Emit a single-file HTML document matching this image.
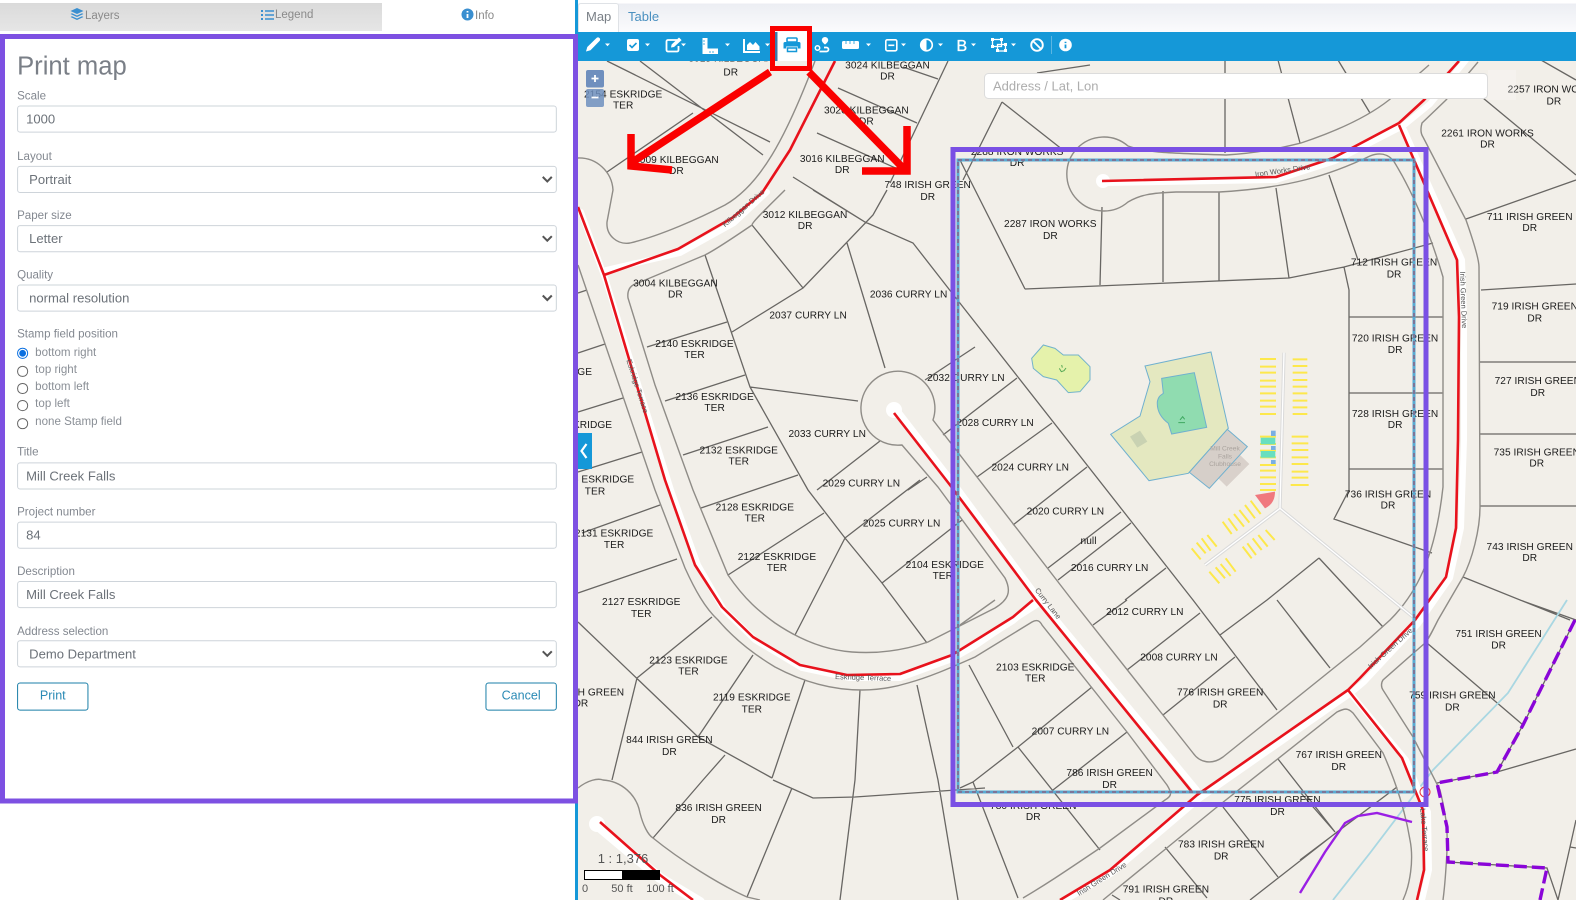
<!DOCTYPE html>
<html lang="en"><head><meta charset="utf-8"><title>Print map</title>
<style>
*{box-sizing:border-box}
html,body{margin:0;padding:0;width:1576px;height:900px;overflow:hidden;background:#fff;font-family:"Liberation Sans",sans-serif}
.abs{position:absolute}
#left{position:absolute;left:0;top:0;width:575px;height:900px;background:#fff;overflow:hidden}
.tabbg{position:absolute;left:0;top:3px;width:382px;height:28px;background:linear-gradient(#dadada,#e6e6e6)}
.tab{position:absolute;top:8px;font-size:11.5px;line-height:14px;color:#8a8a8a;white-space:nowrap}
.tab svg{vertical-align:-2px;margin-right:1px}
#form{position:absolute;left:0;top:0;width:575px;height:900px;transform:scale(1.0051);transform-origin:0 0;color:#7b8088}
#form h1{position:absolute;left:17px;top:51px;margin:0;font-weight:400;font-size:25.5px;line-height:30px;color:#7a7f87}
.lb{position:absolute;left:17px;font-size:11.5px;line-height:14px;color:#838890;white-space:nowrap}
.in{position:absolute;left:17px;width:537px;height:27px;border:1px solid #ced4da;border-radius:3px;background:#fff;font-size:13px;line-height:25px;color:#6c7279;padding-left:8px;white-space:nowrap}
.in.sel{padding-left:11px}
.in.sel svg{position:absolute;right:3px;top:8px}
.rd{position:absolute;left:35px;font-size:11.5px;line-height:14px;color:#8a8f96;white-space:nowrap}
.ci{position:absolute;left:17px;width:10.5px;height:10.5px;border:1px solid #666;border-radius:50%;background:#fff}
.ci.on{border:1.5px solid #0a6fe0;background:radial-gradient(circle,#0a6fe0 0,#0a6fe0 3.1px,#fff 3.6px)}
.btn{position:absolute;top:679px;width:71px;height:28px;border:1px solid #1b7fa8;border-radius:3px;background:#fff;color:#2a8ab5;font-size:12.5px;line-height:25px;text-align:center}
#tabs{position:absolute;left:578px;top:0;width:998px;height:32px;background:linear-gradient(#fff 0,#fff 3px,#eceef3 4px,#fbfbfd 32px)}
#tbar{position:absolute;left:575px;top:32px;width:1001px;height:29px;background:#1598d8}
svg{display:block}
text{font-family:"Liberation Sans",sans-serif}
</style></head><body>

<div id="tabs"></div>
<div class="abs" style="left:578px;top:3px;width:41px;height:30px;background:#fff;border:1px solid #dfe2e6;border-bottom:0;border-radius:3px 3px 0 0"></div>
<div class="abs" style="left:586px;top:9px;font-size:13px;line-height:15px;color:#7a8087">Map</div>
<div class="abs" style="left:628px;top:9px;font-size:13px;line-height:15px;color:#4a90c0">Table</div>

<div id="tbar"></div>
<svg class="abs" style="left:0;top:0" width="1576" height="900" viewBox="0 0 1576 900">
<defs><clipPath id="mc"><rect x="578" y="61" width="998" height="839"/></clipPath></defs>
<g clip-path="url(#mc)"><g style="filter:blur(.35px)">
<rect x="570" y="55" width="1010" height="850" fill="#f2efe9"/>

<!-- lot lines -->
<path fill="none" stroke="#686663" stroke-width="1.3" d="
M607 61L770 142M640 61L763 155M693 113L607 172M948 61L890 183M938 79L903 67M838 88L917 123M817 133L900 170M793 177L865 222
M887 190L873 215L803 288L732 332M847 243L885 368M813 190L865 222L913 243L952 293L1193 600L1277 710
M752 225L803 288M705 255L750 387L808 490L845 538L882 583L927 643M727 322L647 347M745 375L665 401M750 387L858 401M768 427L683 455M798 475L701 508
M880 441L817 490M925 380L975 347M927 477L908 490M943 435L1017 378M578 293L587 290M578 353L605 344M578 412L623 398M578 472L642 452
M660 505L582 533M677 559L578 593M824 513L728 575M845 538L795 635M845 538L920 480M882 583L962 520M712 617L637 678L612 780M578 622L698 737L772 778
M753 655L698 737M805 680L772 778M860 690L855 780L840 900M917 685L938 780L958 900M725 755L703 780L653 838M792 788L747 897M773 780L813 798L855 797L985 788
M969 665L1013 747M960 788L973 782L1018 747L1092 687M1018 747L1100 850M1053 790L1127 732M973 782L1018 898M1093 625L1127 600M1127 670L1200 613M1163 715L1235 657M1220 635L1267 600M1277 600L1330 668
M1278 759L1335 832M1165 847L1207 898M1223 807L1278 877M1250 900L1337 832L1397 787M1112 895L1120 900
M1052 423L977 477M1087 467L1013 525M1121 512L1048 568M1131 523L1058 580M1166 568L1125 600
M1219 192L1219 282M1276 188L1289 278M1329 175L1358 260M1025 289L1289 278L1344 267L1433 243M1344 267L1349 290L1349 490L1334 519L1432 553M1349 317L1443 317M1349 393L1443 393M1349 469L1443 469
M1025 289L960 160M1102 207L1100 285M1163 191L1163 282M1002 102L963 180M1002 102L1063 150M1037 73L1090 65M1225 60L1225 153M1278 60L1300 143M1338 60L1370 113
M1483 98L1576 175M1466 219L1576 180M1481 290L1576 284M1541 60L1576 80M1480 362L1576 362M1480 434L1576 434M1480 506L1576 506M1463 577L1570 620
M1319 558L1267 600M1319 558L1383 627M1427 643L1523 725M1497 772L1576 749M1437 783L1497 772L1523 725L1575 620M1520 600L1576 620M1300 630L1330 668M1397 787L1300 860M1300 792L1335 832
M1448 862L1547 868L1558 900M1576 820L1570 847L1558 900M1570 847L1576 848"/>

<!-- water -->
<path fill="none" stroke="#a9d7e2" stroke-width="1.8" d="M1567 600L1508 693L1433 770L1370 853L1333 900"/>

<!-- road edges -->
<path fill="none" stroke="#8f8c87" stroke-width="1.4" d="
M578 158A34 34 0 0 1 613 190L607 222C606 236 618 245 630 243C660 236 700 218 725 205C760 185 785 140 815 61
M785 190C770 205 752 222 752 225C730 240 715 250 705 255L638 283C630 285 627 290 628 298L655 385L693 490L728 575C745 600 760 612 775 623C800 640 825 650 852 652C880 654 905 650 928 642L995 608C1008 600 1012 592 1005 578L938 487L902 445A37 37 0 1 1 933 420L1072 600L1193 753C1200 763 1212 765 1223 757L1360 647L1390 620C1415 595 1435 560 1443 487L1443 277C1432 240 1415 195 1393 160C1387 154 1380 152 1370 156C1330 175 1290 188 1219 192L1176 192C1150 193 1140 195 1128 202A37 37 0 1 1 1128 146C1145 152 1160 153 1226 155C1260 153 1280 148 1301 143C1340 130 1370 115 1389 100L1429 65
M578 265L655 490L685 568C695 590 705 608 718 620C735 640 755 655 775 667C805 683 835 690 862 690C880 690 895 687 908 683C930 677 950 668 975 657L1032 622C1037 619 1040 621 1042 625L1127 732L1167 785C1172 793 1172 796 1165 800L1100 848C1060 875 1045 885 1023 898
M960 625L995 600M1217 807L1337 712C1345 708 1348 708 1353 713L1383 753C1395 780 1405 810 1410 840C1414 860 1410 885 1403 900M1217 807L1103 900
M1478 62L1446 100L1422 123C1420 130 1421 134 1423 137L1466 220C1473 240 1479 260 1479 267L1480 507C1480 530 1472 560 1463 577L1438 620C1432 632 1428 640 1425 643L1383 680C1381 683 1381 687 1383 690L1413 737L1440 790C1446 815 1448 830 1447 850C1446 870 1445 885 1443 900
M578 788C588 780 598 778 603 780A40 40 0 0 1 640 813C643 825 648 835 653 838C680 860 720 885 747 897L760 900"/>

<!-- sidewalk white strips -->
<g fill="none" stroke="#fff" stroke-linecap="round" stroke-linejoin="round" stroke-width="6">
<path d="M581 212L606 281L671 490L698 565L724 610L755 640L802 668L849 678L900 678L952 659L975 646L1013 620L1038 604"/>
<path d="M606 270L680 253L734 223L767 192"/>
<path d="M960 654L1013 621L1038 600"/>
<path d="M897 410L955 485L1040 600L1197 790"/>
<path d="M1062 902L1112 873L1199 799L1351 693L1364 682L1418 624L1450 578L1461 528L1464 440L1464 317L1462 260L1404 130"/>
<path d="M1104 183L1276 180L1335 161L1403 126L1430 104L1466 60"/>
<path d="M1351 694L1406 760L1428 812L1429 870L1422 900"/>
<path d="M597 825L660 878L700 902" stroke-width="10"/>
</g>
<circle cx="894" cy="410" r="8" fill="#fff"/><circle cx="597" cy="824" r="8" fill="#fff"/><circle cx="1103" cy="181" r="7" fill="#fff"/>

<!-- red center lines -->
<g fill="none" stroke="#e8121c" stroke-linejoin="round" stroke-width="2.6">
<path d="M578 207L604 275L665 480L695 565L722 607L753 637L800 665L847 675L900 674L952 655L1013 617L1033 600"/>
<path d="M604 275L678 249L732 218L762 193L790 150L835 61"/>
<path d="M894 413L950 485L1036 600L1192 792"/>
<path d="M1060 900L1110 870L1197 795L1348 690L1360 678L1415 620L1446 577L1456 528L1458 440L1459 317L1457 260L1399 125"/>
<path d="M1102 181L1276 177L1333 158L1399 123L1424 100L1459 61"/>
<path d="M1348 690L1402 758L1423 810L1424 870L1417 900"/>
<path d="M600 822L660 875L693 900"/>
</g>

<!-- Park (zoom coordinates) -->
<g transform="translate(1000 340) scale(.33333)">
<path d="M852 38L840 505L1239 831M840 505L615 675" fill="none" stroke="#dadada" stroke-width="10"/>
<path d="M852 38L840 505L1239 831M840 505L615 675" fill="none" stroke="#fff" stroke-width="4"/>
<path d="M95 55L130 15L165 25L190 45L235 45L270 80L270 120L240 155L205 158L170 120L130 110L100 85Z" fill="#e5f2ab" stroke="#72b3cb" stroke-width="3"/>
<path d="M178 85l6 10l8-3l6-8M185 75l2 8" fill="none" stroke="#55a855" stroke-width="3"/>
<path d="M435 78L633 36L685 265L565 400L447 422L332 283L420 228L450 125Z" fill="#e4e8c0" stroke="#6fb0cf" stroke-width="3"/>
<path d="M485 115L583 98L620 262L515 282L505 250C485 235 470 215 472 185C476 165 485 165 490 160Z" fill="#90dcb0" stroke="#6fb0cf" stroke-width="3"/>
<path d="M535 248h20M540 240l8-10l6 8" fill="none" stroke="#3ea860" stroke-width="3"/>
<path d="M390 290L420 272L442 305L412 323Z" fill="#c9d2b2"/>
<path d="M720 345L748 372L680 440L655 415Z" fill="#d9d1cb"/>
<path d="M682 268L742 320L628 445L568 397Z" fill="#d6cfc9" stroke="#6fb0cf" stroke-width="3"/>
<text x="675" y="332" text-anchor="middle" font-size="20" fill="#aaa39e">Mill Creek</text>
<text x="675" y="355" text-anchor="middle" font-size="20" fill="#aaa39e">Falls</text>
<text x="675" y="378" text-anchor="middle" font-size="20" fill="#aaa39e">Clubhouse</text>
<path fill="none" stroke="#fde84b" stroke-width="6" d="
M780 57h48M780 80h48M780 98h48M780 122h48M780 140h48M780 160h48M780 182h48M780 200h48M780 222h48
M780 290h48M780 312h48M780 332h48M780 352h48M780 375h48M780 392h48M780 412h48M780 432h48M780 450h48
M878 58h44M878 78h44M878 98h44M878 120h44M878 140h44M878 160h44M878 182h44M878 202h44M878 222h44
M875 290h50M875 310h50M875 330h50M875 352h50M875 372h50M875 395h50M875 413h50M872 435h54
M668 545L695 582M685 535L712 572M702 522L732 560M718 510L748 548M735 495L765 535M752 482L782 522
M575 625L602 658M590 608L617 640M605 595L632 632M622 585L650 620
M728 620L755 655M742 610L768 645M758 595L785 630M775 585L803 620M797 570L824 600
M628 695L658 730M647 682L675 715M662 672L692 708M677 655L707 695"/>
<rect x="782" y="293" width="44" height="20" fill="#68dfbf"/><rect x="782" y="333" width="44" height="20" fill="#68dfbf"/>
<rect x="813" y="272" width="14" height="16" fill="#79afe2"/><rect x="813" y="318" width="14" height="12" fill="#79afe2"/><rect x="813" y="360" width="14" height="12" fill="#79afe2"/>
<path d="M765 465L825 455C825 480 815 495 795 505Z" fill="#f0787e"/>
</g>

<!-- purple routes -->
<path fill="none" stroke="#8a05d8" stroke-width="3.4" stroke-dasharray="13 5" d="M1575 620L1523 725L1497 772L1437 783L1447 827L1448 862L1547 868L1540 900"/>
<path fill="none" stroke="#9a1fe4" stroke-width="2.4" d="M1300 893L1325 852L1345 823L1358 816L1377 813L1412 822"/>
<circle cx="1425" cy="792" r="5" fill="none" stroke="#e8303a"/>

<!-- road names -->
<g font-size="7.5" fill="#555" text-anchor="middle">
<text transform="translate(745 210) rotate(-41)">Kilbeggan Drive</text>
<text transform="translate(1283 173) rotate(-8)">Iron Works Drive</text>
<text transform="translate(1461 300) rotate(88)">Irish Green Drive</text>
<text transform="translate(635 387) rotate(72)">Eskridge Terrace</text>
<text transform="translate(863 680) rotate(2)">Eskridge Terrace</text>
<text transform="translate(1046 605) rotate(52)">Curry Lane</text>
<text transform="translate(1392 650) rotate(-42)">Irish Green Drive</text>
<text transform="translate(1103 881) rotate(-32)">Irish Green Drive</text>
<text transform="translate(1422 830) rotate(85)">Lake Terrace</text>
</g>

<!-- parcel labels -->
<g transform="scale(1.0051)" font-size="10.1" fill="#1a1a1a" text-anchor="middle" style="letter-spacing:.05px">
<text x="727" y="61">3015 KILBEGGAN</text><text x="727" y="75">DR</text>
<text x="883" y="68">3024 KILBEGGAN</text><text x="883" y="79">DR</text>
<text x="620" y="97">2154 ESKRIDGE</text><text x="620" y="108">TER</text>
<text x="862" y="113">3020 KILBEGGAN</text><text x="862" y="124">DR</text>
<text x="673" y="162">3009 KILBEGGAN</text><text x="673" y="173">DR</text>
<text x="838" y="161">3016 KILBEGGAN</text><text x="838" y="172">DR</text>
<text x="923" y="187">748 IRISH GREEN</text><text x="923" y="199">DR</text>
<text x="1012" y="154">2288 IRON WORKS</text><text x="1012" y="165">DR</text>
<text x="1045" y="226">2287 IRON WORKS</text><text x="1045" y="238">DR</text>
<text x="801" y="217">3012 KILBEGGAN</text><text x="801" y="228">DR</text>
<text x="672" y="285">3004 KILBEGGAN</text><text x="672" y="296">DR</text>
<text x="904" y="296">2036 CURRY LN</text><text x="804" y="317">2037 CURRY LN</text>
<text x="691" y="345">2140 ESKRIDGE</text><text x="691" y="356">TER</text>
<text x="711" y="398">2136 ESKRIDGE</text><text x="711" y="409">TER</text>
<text x="823" y="435">2033 CURRY LN</text><text x="961" y="379">2032 CURRY LN</text>
<text x="990" y="424">2028 CURRY LN</text><text x="1025" y="468">2024 CURRY LN</text>
<text x="1060" y="512">2020 CURRY LN</text><text x="1083" y="541">null</text>
<text x="1104" y="568">2016 CURRY LN</text><text x="1139" y="612">2012 CURRY LN</text>
<text x="1173" y="657">2008 CURRY LN</text><text x="857" y="484">2029 CURRY LN</text>
<text x="897" y="524">2025 CURRY LN</text>
<text x="735" y="451">2132 ESKRIDGE</text><text x="735" y="462">TER</text>
<text x="751" y="508">2128 ESKRIDGE</text><text x="751" y="519">TER</text>
<text x="773" y="557">2122 ESKRIDGE</text><text x="773" y="568">TER</text>
<text x="940" y="565">2104 ESKRIDGE</text><text x="938" y="576">TER</text>
<text x="592" y="480">2135 ESKRIDGE</text><text x="592" y="492">TER</text>
<text x="611" y="534">2131 ESKRIDGE</text><text x="611" y="545">TER</text>
<text x="638" y="602">2127 ESKRIDGE</text><text x="638" y="614">TER</text>
<text x="685" y="660">2123 ESKRIDGE</text><text x="685" y="671">TER</text>
<text x="748" y="697">2119 ESKRIDGE</text><text x="748" y="709">TER</text>
<text x="1030" y="667">2103 ESKRIDGE</text><text x="1030" y="678">TER</text>
<text x="1065" y="731">2007 CURRY LN</text>
<text x="1104" y="772">786 IRISH GREEN</text><text x="1104" y="784">DR</text>
<text x="1214" y="692">776 IRISH GREEN</text><text x="1214" y="704">DR</text>
<text x="1332" y="754">767 IRISH GREEN</text><text x="1332" y="766">DR</text>
<text x="1271" y="799">775 IRISH GREEN</text><text x="1271" y="811">DR</text>
<text x="1215" y="843">783 IRISH GREEN</text><text x="1215" y="855">DR</text>
<text x="1160" y="888">791 IRISH GREEN</text><text x="1160" y="900">DR</text>
<text x="1028" y="805">780 IRISH GREEN</text><text x="1028" y="816">DR</text>
<text x="666" y="739">844 IRISH GREEN</text><text x="666" y="751">DR</text>
<text x="715" y="807">836 IRISH GREEN</text><text x="715" y="819">DR</text>
<text x="578" y="692">848 IRISH GREEN</text><text x="578" y="703">DR</text>
<text x="570" y="426">2139 ESKRIDGE</text><text x="550" y="373">2143 ESKRIDGE</text><text x="532" y="320">2147 ESKRIDGE</text>
<text x="1387" y="264">712 IRISH GREEN</text><text x="1387" y="276">DR</text>
<text x="1388" y="340">720 IRISH GREEN</text><text x="1388" y="351">DR</text>
<text x="1388" y="415">728 IRISH GREEN</text><text x="1388" y="426">DR</text>
<text x="1381" y="495">736 IRISH GREEN</text><text x="1381" y="506">DR</text>
<text x="1522" y="547">743 IRISH GREEN</text><text x="1522" y="558">DR</text>
<text x="1529" y="453">735 IRISH GREEN</text><text x="1529" y="464">DR</text>
<text x="1530" y="382">727 IRISH GREEN</text><text x="1530" y="394">DR</text>
<text x="1527" y="308">719 IRISH GREEN</text><text x="1527" y="320">DR</text>
<text x="1522" y="219">711 IRISH GREEN</text><text x="1522" y="230">DR</text>
<text x="1480" y="136">2261 IRON WORKS</text><text x="1480" y="147">DR</text>
<text x="1546" y="92">2257 IRON WORKS</text><text x="1546" y="104">DR</text>
<text x="1491" y="634">751 IRISH GREEN</text><text x="1491" y="645">DR</text>
<text x="1445" y="695">759 IRISH GREEN</text><text x="1445" y="707">DR</text>
</g>

<!-- scale -->
<text x="623" y="863" text-anchor="middle" font-size="13" fill="#555">1 : 1,376</text>
<rect x="584.5" y="870.5" width="38" height="9" fill="#fff" stroke="#000"/><rect x="622" y="870" width="38" height="10" fill="#000"/>
<g font-size="11" fill="#555" text-anchor="middle"><text x="585" y="892">0</text><text x="622" y="892">50 ft</text><text x="660" y="892">100 ft</text></g>

<!-- zoom controls + search -->
<rect x="586" y="70" width="18" height="17.5" rx="2" fill="#6f8fbe"/><rect x="586" y="89" width="18" height="18" rx="2" fill="#6f8fbe" opacity=".85"/>
<path d="M591.500 78.500h7M595 75v7M591.500 97.500h7" stroke="#fff" stroke-width="1.800"/>
<rect x="1488" y="70" width="28" height="30" fill="#fff" opacity=".22"/>
<rect x="984.5" y="73.5" width="503" height="25" rx="4" fill="#fff" stroke="#dcdcdc"/>
<text x="993" y="90.5" font-size="13" fill="#adadad">Address / Lat, Lon</text>

<!-- collapse -->
<rect x="578" y="433" width="14" height="36" fill="#1598d8"/>
<path d="M586.5 444L581.5 451L586.5 458" fill="none" stroke="#fff" stroke-width="2.2"/>
</g></g>

<!-- toolbar icons -->
<g fill="#fff" stroke="none">
<path d="M586 51.500l1.300-4.500L596.500 38a2 2 0 0 1 3 3L590.500 50.200Z"/>
<rect x="627" y="39" width="12" height="12" rx="2"/><path d="M629.500 45l2.500 2.500l4.500-4.500" fill="none" stroke="#1598d8" stroke-width="1.600"/>
<path d="M677 40h-9a1.500 1.500 0 0 0-1.500 1.500V50a1.500 1.500 0 0 0 1.500 1.500h9a1.500 1.500 0 0 0 1.500-1.500V46" fill="none" stroke="#fff" stroke-width="1.800"/><path d="M671 47.500l.6-3L679 37.500l2.600 2.600L674 47Z"/>
<path d="M702.500 38h5v10.500h10.500v5.500h-15.500Z"/><path d="M703 41h2M703 44h2M710 53v-2M713 53v-2" stroke="#1598d8" stroke-width=".8"/>
<path d="M745 39v12h15v2h-17V39Z"/><path d="M747 50v-5l3-3l3 3l2.500-3l4 4.500v3.500Z"/>
<!-- route -->
<circle cx="817.500" cy="48" r="2.200" fill="none" stroke="#fff" stroke-width="1.500"/>
<path d="M825 37a3.200 3.200 0 0 1 3.200 3.200c0 1.900-3.200 4.300-3.200 4.300s-3.200-2.400-3.200-4.300A3.200 3.200 0 0 1 825 37Z"/>
<path d="M819.500 51.500h7a2 2 0 0 0 0-4h-2.500" fill="none" stroke="#fff" stroke-width="1.700"/>
<!-- ruler -->
<rect x="842" y="41" width="17" height="8" rx="1.500"/><path d="M846 41v3M850 41v3M854 41v3" stroke="#1598d8" stroke-width=".8"/>
<!-- minus square -->
<rect x="885.800" y="39.800" width="11" height="11" rx="1.500" fill="none" stroke="#fff" stroke-width="1.600"/><rect x="888.300" y="44.500" width="6" height="1.600"/>
<!-- adjust -->
<circle cx="926.500" cy="45" r="5.800" fill="none" stroke="#fff" stroke-width="1.600"/><path d="M926.500 39.200a5.800 5.800 0 0 1 0 11.600Z" transform="rotate(180 926.500 45)"/>
<text x="956.500" y="51" font-size="16" fill="#fff" stroke="#fff" stroke-width=".35">B</text>
<!-- vector -->
<g fill="none" stroke="#fff" stroke-width="1.300"><rect x="992.500" y="39.500" width="9" height="7"/><rect x="997.500" y="44.500" width="8" height="6.500"/></g>
<path d="M991 38h3v3h-3ZM1000 38h3v3h-3ZM991 45h3v3h-3ZM996 49h3v3h-3ZM1004 43h3v3h-3ZM1004 49h3v3h-3Z"/>
<!-- ban -->
<circle cx="1037" cy="45" r="5.800" fill="none" stroke="#fff" stroke-width="1.900"/><path d="M1033 41l8 8" stroke="#fff" stroke-width="1.900"/>
<path d="M1051.500 36v18" stroke="#5cb6e2" stroke-width="1"/>
<circle cx="1065.500" cy="45" r="6.300"/><path d="M1065.500 41.800v1.300M1065.500 44.500v3.800" stroke="#1598d8" stroke-width="1.800"/>
<path d="M605 43.500h5l-2.500 2.700ZM645 43.500h5l-2.500 2.700ZM681 43.500h5l-2.500 2.700ZM725 43.500h5l-2.500 2.700ZM765 43.500h5l-2.500 2.700ZM866 43.500h5l-2.500 2.700ZM901 43.500h5l-2.500 2.700ZM938 43.500h5l-2.500 2.700ZM971 43.500h5l-2.500 2.700ZM1011 43.500h5l-2.500 2.700Z"/>
</g>
<rect x="777" y="32" width="30" height="29" fill="#fff"/><rect x="775" y="32" width="2.500" height="29" fill="#3a79a8"/>
<g fill="#1598d8"><rect x="787" y="38" width="10" height="4" rx="1" fill="none" stroke="#1598d8" stroke-width="1.600"/><path d="M785 42h14a1.500 1.500 0 0 1 1.500 1.500v5h-2.700v-2h-11.600v2h-2.700v-5A1.500 1.500 0 0 1 785 42Z"/><rect x="787.500" y="48" width="9" height="3.500" fill="none" stroke="#1598d8" stroke-width="1.500"/></g>
</svg>

<!-- Left panel -->
<div id="left">
 <div class="tabbg"></div>
 <div class="tab" style="left:70px">
  <svg style="display:inline" width="14" height="13" viewBox="0 0 14 13"><path d="M7 0l6.500 3L7 6L.5 3ZM2 5.200l5 2.300l5-2.300l1.500.8L7 9L.5 6ZM2 8.200l5 2.300l5-2.300l1.500.8L7 12L.5 9Z" fill="#3a8fd0"/></svg>Layers</div>
 <div class="tab" style="left:261px">
  <svg style="display:inline" width="13" height="11" viewBox="0 0 13 11"><path d="M0 1h2v2H0ZM0 5h2v2H0ZM0 9h2v2H0ZM4 1.300h9v1.400H4ZM4 5.300h9v1.400H4ZM4 9.300h9v1.400H4Z" fill="#3a8fd0"/></svg>Legend</div>
 <div class="tab" style="left:461px;top:8px">
  <svg style="display:inline" width="13" height="13" viewBox="0 0 13 13"><circle cx="6.500" cy="6.500" r="6" fill="#3a8fd0"/><path d="M6.500 3v1.500M6.500 6v4" stroke="#fff" stroke-width="1.800"/></svg>Info</div>
 <div id="form">
  <h1>Print map</h1>
  <div class="lb" style="top:89px">Scale</div>
  <div class="in" style="top:105px">1000</div>
  <div class="lb" style="top:149px">Layout</div>
  <div class="in sel" style="top:165px">Portrait<svg width="11" height="9" viewBox="0 0 11 9"><path d="M1 2l4.500 4.500L10 2" fill="none" stroke="#555" stroke-width="2"/></svg></div>
  <div class="lb" style="top:208px">Paper size</div>
  <div class="in sel" style="top:224px">Letter<svg width="11" height="9" viewBox="0 0 11 9"><path d="M1 2l4.500 4.500L10 2" fill="none" stroke="#555" stroke-width="2"/></svg></div>
  <div class="lb" style="top:267px">Quality</div>
  <div class="in sel" style="top:283px">normal resolution<svg width="11" height="9" viewBox="0 0 11 9"><path d="M1 2l4.500 4.500L10 2" fill="none" stroke="#555" stroke-width="2"/></svg></div>
  <div class="lb" style="top:326px">Stamp field position</div>
  <div class="ci on" style="top:346px"></div><div class="rd" style="top:344px">bottom right</div>
  <div class="ci" style="top:364px"></div><div class="rd" style="top:361px">top right</div>
  <div class="ci" style="top:381px"></div><div class="rd" style="top:378px">bottom left</div>
  <div class="ci" style="top:398px"></div><div class="rd" style="top:395px">top left</div>
  <div class="ci" style="top:416px"></div><div class="rd" style="top:413px">none Stamp field</div>
  <div class="lb" style="top:443px">Title</div>
  <div class="in" style="top:460px">Mill Creek Falls</div>
  <div class="lb" style="top:503px">Project number</div>
  <div class="in" style="top:519px">84</div>
  <div class="lb" style="top:562px">Description</div>
  <div class="in" style="top:578px">Mill Creek Falls</div>
  <div class="lb" style="top:622px">Address selection</div>
  <div class="in sel" style="top:637px">Demo Department<svg width="11" height="9" viewBox="0 0 11 9"><path d="M1 2l4.500 4.500L10 2" fill="none" stroke="#555" stroke-width="2"/></svg></div>
  <div class="btn" style="left:17px">Print</div>
  <div class="btn" style="left:483px">Cancel</div>
 </div>
</div>

<!-- Overlay annotations -->
<svg class="abs" style="left:0;top:0" width="1576" height="900" viewBox="0 0 1576 900">
<rect x="575" y="0" width="3" height="34" fill="#1598d8"/><rect x="575" y="803" width="3" height="97" fill="#1598d8"/>
<rect x="2.500" y="36.500" width="573" height="764.500" fill="none" stroke="#7d50e2" stroke-width="5"/>
<rect x="958" y="160" width="456" height="632" fill="none" stroke="#58aad2" stroke-width="3"/>
<rect x="958" y="160" width="456" height="632" fill="none" stroke="#a0405e" stroke-width="1" stroke-dasharray="4 3"/>
<rect x="953" y="149.500" width="473" height="655" fill="none" stroke="#7a50e4" stroke-width="5"/>
<rect x="772.500" y="28.500" width="37" height="40" fill="none" stroke="#fa0000" stroke-width="5"/>
<g fill="none" stroke="#fa0000" stroke-width="7.500">
<path d="M770 72L631 163"/><path d="M631 134L631 166L672 170"/>
<path d="M809 72L905 170"/><path d="M907 126L907 171L862 171"/>
</g>
</svg>
</body></html>
